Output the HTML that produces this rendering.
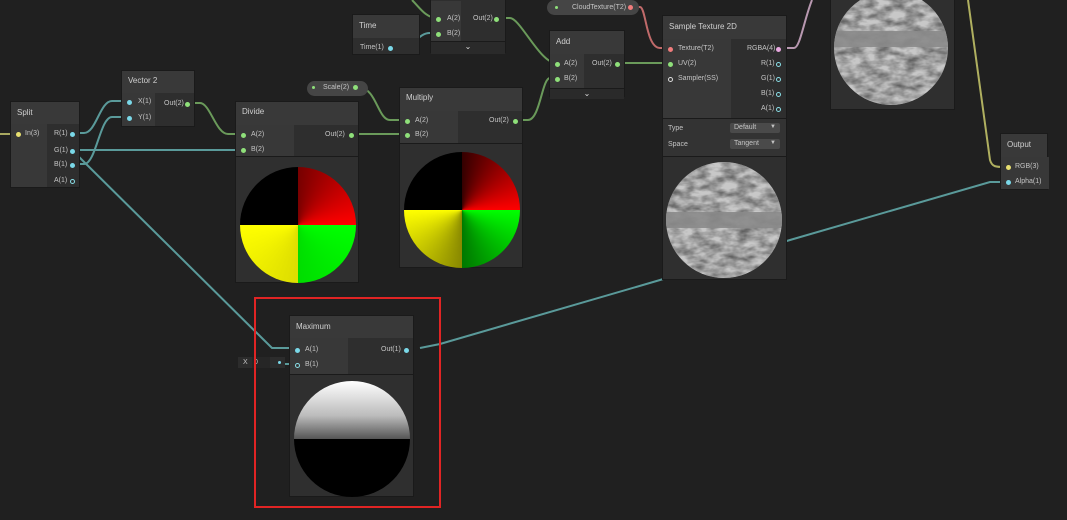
<!DOCTYPE html><html><head><style>
body{margin:0;width:1067px;height:520px;background:#202020;overflow:hidden;position:relative;font-family:"Liberation Sans",sans-serif;font-size:7px;color:#c4c4c4}
.n{position:absolute;background:#2e2e2e;border:1px solid #1a1a1a;box-sizing:border-box}
.h{position:absolute;left:0;right:0;top:0;background:#393939;font-size:8px;padding-left:6px;color:#d0d0d0;box-sizing:border-box}
.lc{position:absolute;left:0;background:#383838}
.t{position:absolute;white-space:nowrap}
.d{position:absolute;width:5px;height:5px;border-radius:50%;box-sizing:border-box}
.g{background:#8fe07a}.c{background:#7ad8e8}.y{background:#e8e070}.r{background:#f07c7c}.p{background:#e8a8e0}
.o{border:1px solid #8adfe8}.w{border:1px solid #ddd}
.pv{position:absolute;left:0;right:0;background:#2f2f2f;border-top:1px solid #1a1a1a}
.sp{position:absolute;border-radius:50%;overflow:hidden}
.bar{position:absolute;left:0;right:0;background:#2a2a2a;border-top:1px solid #1a1a1a;text-align:center;font-size:8px;line-height:10px;color:#ddd}
.pill{position:absolute;background:#454545;border-radius:8px;height:15px}
</style></head><body>
<svg width="1067" height="520" style="position:absolute;left:0;top:0" fill="none" stroke-width="2">
<path d="M0 134H18" stroke="#a8a860"/>
<path d="M72 133H84C96 133 100 101 112 101H128" stroke="#5a9a9a"/>
<path d="M72 164H84C96 164 100 117 112 117H128" stroke="#5a9a9a"/>
<path d="M72 150H240" stroke="#5a9a9a"/>
<path d="M72 150L272 348H295" stroke="#5a9a9a"/>
<path d="M187 103H200C210 103 216 134 228 134H240" stroke="#6a9a5a"/>
<path d="M360 88C376 88 378 120 390 120H405" stroke="#6a9a5a"/>
<path d="M350 134H405" stroke="#6a9a5a"/>
<path d="M516 120H528C540 120 542 78 550 78H556" stroke="#6a9a5a"/>
<path d="M498 18H510C520 18 540 63 556 63" stroke="#6a9a5a"/>
<path d="M395 47H404C414 47 418 33 430 33H437" stroke="#5a9a9a"/>
<path d="M412 0C420 8 426 18 437 18" stroke="#6a9a5a"/>
<path d="M616 63H668" stroke="#6a9a5a"/>
<path d="M628 7H640C646 7 646 48 660 48H668" stroke="#c06a6a"/>
<path d="M780 48H794C800 48 804 20 812 0" stroke="#b898b0"/>
<path d="M968 0L990 160C992 167 996 167 1005 167" stroke="#b0b060"/>
<path d="M420 348L440 344L660 280L790 240L990 182H1005" stroke="#5a9a9a"/>
<path d="M284 364H295" stroke="#5a9a9a"/>
</svg>
<svg width="0" height="0" style="position:absolute"><filter id="nz"><feTurbulence type="fractalNoise" baseFrequency="0.07 0.14" numOctaves="3" seed="4"/><feColorMatrix type="matrix" values="0 0 0 0 0.1 0 0 0 0 0.1 0 0 0 0 0.1 -1.6 0 0 0 1.15"/></filter></svg>

<!-- Split -->
<div class="n" style="left:10px;top:101px;width:70px;height:87px"><div class="h" style="height:22px;line-height:22px">Split</div><div class="lc" style="top:22px;width:36px;bottom:0"></div>
<div class="d y" style="left:5px;top:30px"></div><div class="t" style="left:14px;top:28px">In(3)</div>
<div class="t" style="left:43px;top:28px">R(1)</div><div class="d c" style="left:59px;top:30px"></div>
<div class="t" style="left:43px;top:45px">G(1)</div><div class="d c" style="left:59px;top:47px"></div>
<div class="t" style="left:43px;top:59px">B(1)</div><div class="d c" style="left:59px;top:61px"></div>
<div class="t" style="left:43px;top:75px">A(1)</div><div class="d o" style="left:59px;top:77px"></div></div>
<!-- Vector2 -->
<div class="n" style="left:121px;top:70px;width:74px;height:57px"><div class="h" style="height:22px;line-height:20px">Vector 2</div><div class="lc" style="top:22px;width:33px;bottom:0"></div>
<div class="d c" style="left:5px;top:29px"></div><div class="t" style="left:16px;top:27px">X(1)</div>
<div class="d c" style="left:5px;top:45px"></div><div class="t" style="left:16px;top:43px">Y(1)</div>
<div class="t" style="left:42px;top:29px">Out(2)</div><div class="d g" style="left:63px;top:31px"></div></div>
<!-- Scale pill -->
<div class="pill" style="left:307px;top:81px;width:61px"><div class="d g" style="left:5px;top:5px;width:3px;height:3px"></div><div class="t" style="left:16px;top:3px">Scale(2)</div><div class="d g" style="left:46px;top:4px"></div></div>
<!-- Divide -->
<div class="n" style="left:235px;top:101px;width:124px;height:182px"><div class="h" style="height:23px;line-height:20px">Divide</div><div class="lc" style="top:23px;width:58px;height:31px"></div>
<div class="d g" style="left:5px;top:31px"></div><div class="t" style="left:15px;top:29px">A(2)</div>
<div class="d g" style="left:5px;top:46px"></div><div class="t" style="left:15px;top:44px">B(2)</div>
<div class="t" style="left:89px;top:29px">Out(2)</div><div class="d g" style="left:113px;top:31px"></div>
<div class="pv" style="top:54px;bottom:0"><div class="sp" style="left:4px;top:10px;width:116px;height:116px;background:conic-gradient(from 0deg,#700 0deg,#f00 90deg,#0f0 90deg,#0d0 180deg,#dd0 180deg,#ff0 270deg,#000 270deg)"></div></div></div>
<!-- Multiply -->
<div class="n" style="left:399px;top:87px;width:124px;height:181px"><div class="h" style="height:23px;line-height:20px">Multiply</div><div class="lc" style="top:23px;width:58px;height:32px"></div>
<div class="d g" style="left:5px;top:31px"></div><div class="t" style="left:15px;top:29px">A(2)</div>
<div class="d g" style="left:5px;top:45px"></div><div class="t" style="left:15px;top:43px">B(2)</div>
<div class="t" style="left:89px;top:29px">Out(2)</div><div class="d g" style="left:113px;top:31px"></div>
<div class="pv" style="top:55px;bottom:0"><div class="sp" style="left:4px;top:8px;width:116px;height:116px;background:conic-gradient(from 0deg,#300 0deg,#f00 90deg,#0f0 90deg,#070 180deg,#880 180deg,#ff0 270deg,#000 270deg)"></div></div></div>
<!-- top node -->
<div class="n" style="left:430px;top:-5px;width:76px;height:58px"><div class="lc" style="top:5px;width:30px;height:40px"></div>
<div class="d g" style="left:5px;top:21px"></div><div class="t" style="left:16px;top:19px">A(2)</div>
<div class="d g" style="left:5px;top:36px"></div><div class="t" style="left:16px;top:34px">B(2)</div>
<div class="t" style="left:42px;top:19px">Out(2)</div><div class="d g" style="left:63px;top:21px"></div>
<div class="bar" style="top:45px;height:12px">&#8964;</div></div>
<!-- Time -->
<div class="n" style="left:352px;top:14px;width:68px;height:41px"><div class="h" style="height:23px;line-height:22px">Time</div>
<div class="t" style="left:7px;top:29px">Time(1)</div><div class="d c" style="left:35px;top:31px"></div></div>
<!-- Add -->
<div class="n" style="left:549px;top:30px;width:76px;height:67px"><div class="h" style="height:23px;line-height:22px">Add</div><div class="lc" style="top:23px;width:34px;height:34px"></div>
<div class="d g" style="left:5px;top:31px"></div><div class="t" style="left:14px;top:29px">A(2)</div>
<div class="d g" style="left:5px;top:46px"></div><div class="t" style="left:14px;top:44px">B(2)</div>
<div class="t" style="left:42px;top:29px">Out(2)</div><div class="d g" style="left:65px;top:31px"></div>
<div class="bar" style="top:57px;height:10px">&#8964;</div></div>
<!-- Cloud pill -->
<div class="pill" style="left:547px;top:0;width:92px"><div class="d g" style="left:8px;top:6px;width:3px;height:3px"></div><div class="t" style="left:25px;top:4px">CloudTexture(T2)</div><div class="d r" style="left:81px;top:5px"></div></div>
<!-- Sample Texture -->
<div class="n" style="left:662px;top:15px;width:125px;height:265px"><div class="h" style="height:23px;line-height:22px">Sample Texture 2D</div><div class="lc" style="top:23px;width:68px;height:79px"></div>
<div class="d r" style="left:5px;top:31px"></div><div class="t" style="left:15px;top:29px">Texture(T2)</div>
<div class="d g" style="left:5px;top:46px"></div><div class="t" style="left:15px;top:44px">UV(2)</div>
<div class="d w" style="left:5px;top:61px"></div><div class="t" style="left:15px;top:59px">Sampler(SS)</div>
<div class="t" style="left:84px;top:29px">RGBA(4)</div><div class="d p" style="left:113px;top:31px"></div>
<div class="t" style="left:98px;top:44px">R(1)</div><div class="d o" style="left:113px;top:46px"></div>
<div class="t" style="left:98px;top:59px">G(1)</div><div class="d o" style="left:113px;top:61px"></div>
<div class="t" style="left:98px;top:74px">B(1)</div><div class="d o" style="left:113px;top:76px"></div>
<div class="t" style="left:98px;top:89px">A(1)</div><div class="d o" style="left:113px;top:91px"></div>
<div style="position:absolute;top:102px;left:0;right:0;height:38px;border-top:1px solid #1a1a1a;background:#333"></div>
<div class="t" style="left:5px;top:109px">Type</div><div class="t" style="left:5px;top:125px">Space</div>
<div style="position:absolute;left:67px;top:107px;width:50px;height:10px;background:#4a4a4a;border-radius:2px"><span class="t" style="left:4px;top:1px">Default</span><span class="t" style="right:4px;top:1px;font-size:6px">&#9660;</span></div>
<div style="position:absolute;left:67px;top:123px;width:50px;height:10px;background:#4a4a4a;border-radius:2px"><span class="t" style="left:4px;top:1px">Tangent</span><span class="t" style="right:4px;top:1px;font-size:6px">&#9660;</span></div>
<div class="pv" style="top:140px;bottom:0"><div class="sp" style="left:3px;top:5px;width:116px;height:116px"><svg width="116" height="116"><rect width="116" height="116" fill="#c8c8c8"/><rect width="116" height="116" filter="url(#nz)"/><rect y="50" width="116" height="16" fill="#8a8a8a" opacity="0.9"/></svg></div></div></div>
<!-- top right preview -->
<div class="n" style="left:830px;top:-10px;width:125px;height:120px;background:#2f2f2f"><div class="sp" style="left:3px;top:0;width:114px;height:114px"><svg width="114" height="114"><rect width="114" height="114" fill="#c8c8c8"/><rect width="114" height="114" filter="url(#nz)"/><rect y="40" width="114" height="16" fill="#8a8a8a" opacity="0.9"/></svg></div></div>
<!-- Output -->
<div class="n" style="left:1000px;top:133px;width:48px;height:57px"><div class="h" style="height:23px;line-height:22px">Output</div><div class="lc" style="top:23px;width:48px;bottom:0"></div>
<div class="d y" style="left:5px;top:31px"></div><div class="t" style="left:14px;top:29px">RGB(3)</div>
<div class="d c" style="left:5px;top:46px"></div><div class="t" style="left:14px;top:44px">Alpha(1)</div></div>
<!-- X input -->
<div style="position:absolute;left:238px;top:357px;width:47px;height:11px;background:#2c2c2c"><span class="t" style="left:5px;top:2px">X</span><div style="position:absolute;left:14px;top:0;width:18px;height:11px;background:#262626"></div><span class="t" style="left:16px;top:2px">0</span><div class="d c" style="left:40px;top:4px;width:3px;height:3px"></div></div>
<!-- Maximum -->
<div class="n" style="left:289px;top:315px;width:125px;height:182px"><div class="h" style="height:22px;line-height:22px">Maximum</div><div class="lc" style="top:22px;width:58px;height:36px"></div>
<div class="d c" style="left:5px;top:32px"></div><div class="t" style="left:15px;top:30px">A(1)</div>
<div class="d o" style="left:5px;top:47px"></div><div class="t" style="left:15px;top:45px">B(1)</div>
<div class="t" style="left:91px;top:30px">Out(1)</div><div class="d c" style="left:114px;top:32px"></div>
<div class="pv" style="top:58px;bottom:0"><div class="sp" style="left:4px;top:6px;width:116px;height:116px;background:linear-gradient(#fff 0%,#bbb 30%,#555 50%,#000 50%,#000 100%)"></div></div></div>
<div style="position:absolute;left:254px;top:297px;width:187px;height:211px;border:2px solid #e02424;box-sizing:border-box"></div>
</body></html>
